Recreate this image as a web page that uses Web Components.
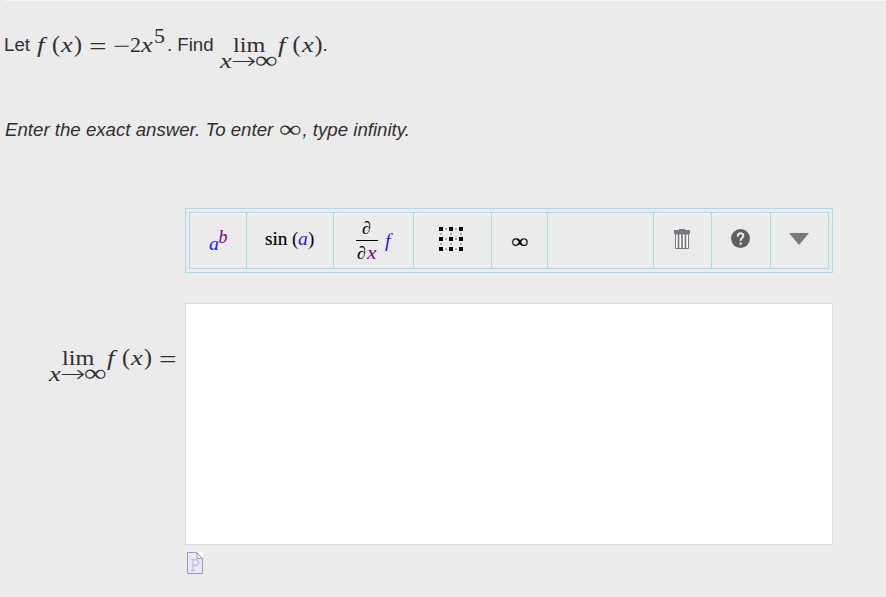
<!DOCTYPE html>
<html lang="en">
<head>
<meta charset="utf-8">
<title>Limit question</title>
<style>
body {
  margin: 0;
  background: #ebebeb;
  color: #303030;
  font-family: "Liberation Sans", Arial, sans-serif;
  font-size: 18.67px;
}
</style>
</head>
<body>
<limit-question></limit-question>

<script>
// attaches an open shadow root and fills it from a parsed template
function render(host, html) {
  const templateElement = document.createElement("template");
  templateElement.innerHTML = html;
  const shadowRoot = host.attachShadow({ mode: "open" });
  shadowRoot.appendChild(templateElement.content.cloneNode(true));
}

/**
 * One symbol of a formula.
 * w: advance, gap: space before, size: font size, sx: stretch, rise: shift up
 */
class MathToken extends HTMLElement {
  constructor() {
    super();
    render(this, `
      <style>
        :host {
          display: inline-block;
          flex: none;
          font-family: "Liberation Serif", "Times New Roman", serif;
          line-height: var(--token-line, 24px);
          white-space: nowrap;
        }
        :host([i]) { font-style: italic; }
        :host([bold]) { -webkit-text-stroke: 0.2px currentColor; }
        :host([arrow]) { font-family: "DejaVu Sans Light", "DejaVu Sans", sans-serif; font-weight: 200; }
        span { display: inline-block; transform-origin: 0 100%; }
      </style>
      <span><slot></slot></span>`);
  }

  connectedCallback() {
    const num = (name, fallback) => Number(this.getAttribute(name) || fallback);
    this.style.width = num("w", 10) + "px";
    this.style.marginLeft = num("gap", 0) + "px";
    this.style.fontSize = num("size", 22) + "px";
    const span = this.shadowRoot.querySelector("span");
    span.style.transform =
      `translateY(${-num("rise", 0)}px) scaleX(${num("sx", 1)})`;
  }
}
customElements.define("math-token", MathToken);

class MathRow extends HTMLElement {
  constructor() {
    super();
    render(this, `
      <style>
        :host { display: inline-flex; align-items: baseline; }
      </style>
      <slot></slot>`);
  }
}
customElements.define("math-row", MathRow);

// lim with "x -> infinity" below it
class MathLimit extends HTMLElement {
  constructor() {
    super();
    render(this, `
      <style>
        :host {
          --token-line: 16px;
          display: inline-flex;
          flex-direction: column;
          width: 58px;
          flex: none;
        }
        math-row { height: 15px; }
      </style>
      <math-row><math-token gap="14" w="33" sx="1.1">lim</math-token></math-row>
      <math-row>
        <math-token i gap="1" w="11" size="20" sx="1.32">x</math-token>
        <math-token arrow w="24" size="24" sx="1.26" rise="-1">→</math-token>
        <math-token w="22" size="24" sx="1.32">∞</math-token>
      </math-row>`);
  }
}
customElements.define("math-limit", MathLimit);

// f (x)
class MathFunction extends HTMLElement {
  constructor() {
    super();
    render(this, `
      <style>
        :host { display: inline-flex; align-items: baseline; flex: none; }
      </style>
      <math-token i gap="1" w="15" sx="1.2">f</math-token>
      <math-token w="8" size="24">(</math-token>
      <math-token i gap="1" w="12" size="21" sx="1.25">x</math-token>
      <math-token w="8" size="24" gap="1">)</math-token>`);
  }
}
customElements.define("math-function", MathFunction);

class ToolButton extends HTMLElement {
  constructor() {
    super();
    render(this, `
      <style>
        :host {
          box-sizing: border-box;
          display: flex;
          border-left: 1px solid #add8e6;
          color: #000;
        }
        div {
          box-sizing: border-box;
          flex: 1;
          display: flex;
          align-items: center;
          justify-content: center;
          border-top: 1px solid #fafafa;
          border-radius: 5px;
          padding: 0 2px 5px 0;
        }
        :host([blank]) div { border-color: transparent; }
      </style>
      <div><slot></slot></div>`);
  }

  connectedCallback() {
    this.style.width = this.getAttribute("w") + "px";
  }
}
customElements.define("tool-button", ToolButton);

class MathToolbar extends HTMLElement {
  constructor() {
    super();
    render(this, `
      <style>
        :host {
          box-sizing: border-box;
          display: block;
          width: 648px;
          height: 65px;
          padding: 3px;
          border: 1px solid #add8e6;
        }
        .bar {
          box-sizing: border-box;
          display: flex;
          height: 57px;
          border: 1px solid #add8e6;
          border-left: 0;
        }
        .a { color: #1a1aff; }
        .b { color: #800080; }
        .frac {
          display: flex;
          flex-direction: column;
          align-items: center;
          margin: 4px 7px 0 4px;
        }
        .frac i { width: 22px; height: 1px; background: #000; }
        svg { display: block; }
      </style>
      <div class="bar">
        <tool-button w="57">
          <math-row>
            <math-token class="a" gap="2" i w="10" size="18" rise="-5" sx="1.1">a</math-token>
            <math-token class="b" i w="9" size="18" rise="2">b</math-token>
          </math-row>
        </tool-button>
        <tool-button w="87">
          <math-row>
            <math-token bold gap="2" w="27" size="18" sx="1.07">sin</math-token>
            <math-token w="6" size="19">(</math-token>
            <math-token class="a" i w="10" size="18" sx="1.1">a</math-token>
            <math-token w="7" size="19">)</math-token>
          </math-row>
        </tool-button>
        <tool-button w="80">
          <div class="frac">
            <math-token i w="10" size="18">∂</math-token>
            <i></i>
            <math-row>
              <math-token i w="10" size="18">∂</math-token>
              <math-token class="b" i w="10" size="18" sx="1.2">x</math-token>
            </math-row>
          </div>
          <math-token class="a" i w="8" size="18" sx="1.1" rise="-2">f</math-token>
        </tool-button>
        <tool-button w="78">
          <svg width="28" height="26" viewBox="0 0 28 26">
            <path d="M1 1h4v4H1zM11 1h4v4h-4zM21 1h4v4h-4zM1 11h4v4H1zM11 11h4v4h-4zM21 11h4v4h-4zM1 21h4v4H1zM11 21h4v4h-4zM21 21h4v4h-4z"/>
            <path fill="#aaa" d="M7 2h2v2H7zM17 2h2v2h-2zM7 12h2v2H7zM17 12h2v2h-2zM7 22h2v2H7zM17 22h2v2h-2zM2 7h2v2H2zM12 7h2v2h-2zM22 7h2v2h-2zM2 17h2v2H2zM12 17h2v2h-2zM22 17h2v2h-2z"/>
          </svg>
        </tool-button>
        <tool-button w="56"><math-token bold gap="2" w="17" size="20" sx="1.2" rise="-2">∞</math-token></tool-button>
        <tool-button blank w="106"></tool-button>
        <tool-button w="58">
          <svg width="18" height="22" viewBox="0 0 18 22">
            <path fill="#77797c" d="M6 1h6v1h5v4H1V2h5z"/>
            <path fill="#fff" stroke="#77797c" d="M2.5 6h13v14.5h-13z"/>
            <path stroke="#77797c" stroke-width="1.7" d="M5.5 6v14M9 6v14M12.5 6v14"/>
          </svg>
        </tool-button>
        <tool-button w="59">
          <svg width="20" height="22" viewBox="0 0 20 22">
            <circle cx="10.5" cy="10.5" r="9.4" fill="#5f6062"/>
            <path fill="none" stroke="#ececec" stroke-width="2" d="M7.8 8.5C7.7 4.1 13.5 4.2 13.3 7.8c-.1 2.2-2.7 2.4-2.7 5"/>
            <path fill="#ececec" d="M9.5 14.5h2.3v2.2H9.5z"/>
          </svg>
        </tool-button>
        <tool-button w="58">
          <svg width="20" height="14" viewBox="0 0 20 14">
            <path fill="#777b7d" d="M0 1h20L10 13z"/>
          </svg>
        </tool-button>
      </div>`);
  }
}
customElements.define("math-toolbar", MathToolbar);

class PreviewIcon extends HTMLElement {
  constructor() {
    super();
    render(this, `
      <style>:host, svg { display: block; }</style>
      <svg width="17" height="22" viewBox="0 0 17 22">
        <path fill="#fff" d="M10 0h6v6z"/>
        <path fill="#e8e8fb" stroke="#a0a0a6" d="M.5.5h9.5v6h5.5v15H.5z"/>
        <path fill="none" stroke="#a0a0a6" d="M9.5.5l6 6"/>
        <path fill="none" stroke="#c4c4d4" stroke-width="1.3" d="M4 7.5h4.5q3 0 3 3t-3 3H6M6 8v10.5M4 18.5h4"/>
      </svg>`);
  }
}
customElements.define("preview-icon", PreviewIcon);

class LimitQuestion extends HTMLElement {
  constructor() {
    super();
    render(this, `
      <style>
        :host {
          box-sizing: border-box;
          display: block;
          height: 597px;
          overflow: hidden;
        }
        .rule { height: 1px; margin-left: 4px; background: #f5f5f5; }
        .prompt {
          display: flex;
          align-items: baseline;
          height: 86px;
          padding: 31px 0 0 4px;
          box-sizing: border-box;
        }
        .prompt > span { padding-bottom: 1px; transform: translateY(-1px); white-space: pre; }
        .hint {
          display: flex;
          align-items: baseline;
          height: 121px;
          padding: 29px 0 0 5px;
          box-sizing: border-box;
          font-style: italic;
          white-space: pre;
        }
        .answer { display: grid; grid-template-columns: 185px 648px; }
        .label {
          display: flex;
          align-items: baseline;
          padding: 42px 0 0 48px;
        }
        math-toolbar { grid-column: 2; margin-bottom: 30px; }
        .field {
          box-sizing: border-box;
          height: 242px;
          background: #fff;
          border: 1px solid #dcdcdc;
        }
        preview-icon { grid-column: 2; margin: 7px 0 0 2px; }
      </style>
      <div class="rule"></div>
      <div class="prompt">
        <span>Let</span>
        <math-function style="margin-left: 6px"></math-function>
        <math-token gap="7" w="17" size="24" sx="1.3" rise="-2">=</math-token>
        <math-token gap="7" w="17" size="24" sx="1.3" rise="-2">−</math-token>
        <math-token w="11">2</math-token>
        <math-token i w="13" size="21" sx="1.25">x</math-token>
        <math-token w="13" rise="9">5</math-token>
        <span>. Find</span>
        <math-limit style="margin-left: 5px"></math-limit>
        <math-function></math-function>
        <span>.</span>
      </div>
      <div class="hint"><span>Enter the exact answer. To enter </span><math-token gap="1" w="23" size="24" sx="1.32" rise="-1" style="font-style: normal">∞</math-token><span>, type infinity.</span></div>
      <div class="answer">
        <math-toolbar></math-toolbar>
        <div class="label">
          <math-limit></math-limit>
          <math-function></math-function>
          <math-token gap="7" w="17" size="24" sx="1.3" rise="-2">=</math-token>
        </div>
        <div class="field"></div>
        <preview-icon></preview-icon>
      </div>`);
  }
}
customElements.define("limit-question", LimitQuestion);
</script>
</body>
</html>
